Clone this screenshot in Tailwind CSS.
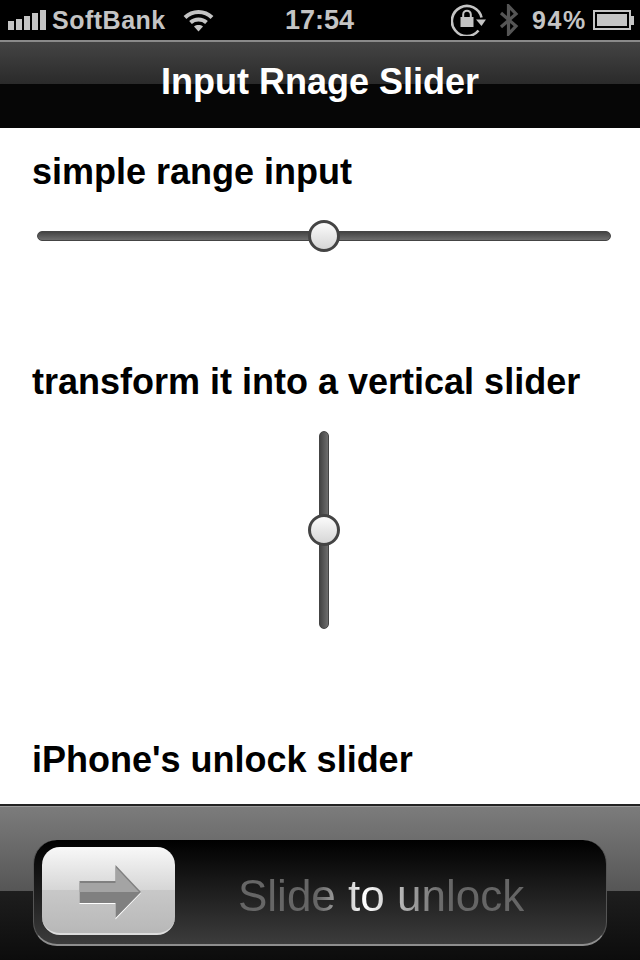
<!DOCTYPE html>
<html lang="en">
<head>
    <meta charset="UTF-8" />
    <title>Input Rnage Slider</title>
    <script src="https://cdn.jsdelivr.net/npm/@tailwindcss/browser@4"></script>
</head>
<body class="w-[640px] h-[960px] overflow-hidden bg-white font-['Liberation_Sans',Arial,sans-serif]">

    <!-- status bar -->
    <div class="relative flex items-center h-[40px] bg-black text-[#c4c4c4]">
        <svg class="ml-[8px] shrink-0" width="38" height="20" viewBox="0 0 38 20" fill="#c4c4c4">
            <rect x="0" y="11" width="6" height="9"/><rect x="8" y="9" width="6" height="11"/><rect x="16" y="6" width="6" height="14"/><rect x="24" y="3" width="6" height="17"/><rect x="32" y="0" width="6" height="20"/>
        </svg>
        <span class="ml-[6px] w-[131px] text-[25px] leading-[40px] font-bold tracking-[0.5px]">SoftBank</span>
        <svg class="shrink-0" width="31" height="24" viewBox="0 0 31 24" fill="none" stroke="#c4c4c4" stroke-width="4">
            <path d="M2 9.5C9.5 2 21.5 2 29 9.5"/><path d="M7.5 14.5C12 10.5 19 10.5 23.5 14.5"/><path d="M15.5 23.5L11 18.5C13.5 16.6 17.5 16.6 20 18.5Z" fill="#c4c4c4" stroke="none"/>
        </svg>
        <span class="ml-[71px] w-[98px] text-[27px] leading-[40px] font-bold">17:54</span>
        <svg class="ml-[68px] shrink-0" width="36" height="32" viewBox="0 0 36 32" fill="none">
            <path d="M27.5 26.5A15 15 0 1 1 30.5 13.5" stroke="#c4c4c4" stroke-width="2.6"/>
            <path d="M25 15.5H35L30.5 22Z" fill="#c4c4c4"/>
            <rect x="9.5" y="13" width="13" height="10" fill="#c4c4c4"/>
            <path d="M12.2 13V10.5a3.8 3.8 0 0 1 7.6 0V13" stroke="#c4c4c4" stroke-width="2"/>
        </svg>
        <svg class="ml-[12px] shrink-0" width="20" height="32" viewBox="0 0 20 32" fill="none" stroke="#555" stroke-width="3.2">
            <path d="M2 9L17 22L9.5 30V2L17 10L2 23"/>
        </svg>
        <span class="ml-[13px] w-[61px] text-[25px] leading-[40px] font-bold tracking-[1.6px]">94%</span>
        <div class="flex items-center shrink-0">
            <div class="w-[38px] h-[20px] border-2 border-[#c4c4c4] p-[2px]"><div class="w-full h-full bg-[#c4c4c4]"></div></div>
            <div class="w-[3px] h-[9px] bg-[#c4c4c4]"></div>
        </div>
    </div>

    <!-- nav bar -->
    <header class="h-[88px] pb-[6px] border-t-2 border-[#8a8a8a] bg-[linear-gradient(#444_0%,#2a2a2a_49%,#060606_49%,#060606_100%)] flex items-center justify-center">
        <h1 class="text-white text-[36px] font-bold leading-none">Input Rnage Slider</h1>
    </header>

    <main class="h-[676px] px-[32px] pt-[24px] flex flex-col text-black">
        <h2 class="h-[40px] leading-[40px] text-[36px] font-bold whitespace-nowrap">simple range input</h2>
        <div class="mt-[28px] h-[32px] flex items-center pl-[5px]">
            <div class="relative shrink-0 w-[574px] h-[10px] rounded-full border border-[#444] bg-[linear-gradient(#444,#6e6e6e)]">
                <div class="absolute left-[270px] top-[-12px] w-[32px] h-[32px] rounded-full border-[3px] border-[#444] bg-[linear-gradient(#fbfbfb,#d6d6d6)]"></div>
            </div>
        </div>

        <h2 class="mt-[110px] h-[40px] leading-[40px] text-[36px] font-bold whitespace-nowrap">transform it into a vertical slider</h2>
        <div class="mt-[29px] h-[198px] flex justify-center pl-[8px]">
            <div class="relative w-[10px] h-[198px] rounded-full border border-[#444] bg-[linear-gradient(90deg,#444,#6e6e6e)]">
                <div class="absolute left-[-12px] top-[82px] w-[32px] h-[32px] rounded-full border-[3px] border-[#444] bg-[linear-gradient(#fbfbfb,#d6d6d6)]"></div>
            </div>
        </div>

        <h2 class="mt-[111px] h-[40px] leading-[40px] text-[36px] font-bold whitespace-nowrap">iPhone's unlock slider</h2>
    </main>

    <!-- unlock bar -->
    <div class="h-[156px] border-t-2 border-[#222] bg-[linear-gradient(#7c7c7c_0%,#565656_55%,#1e1e1e_55%,#0c0c0c_100%)]">
        <div class="h-[1px] bg-[#9a9a9a]"></div>
        <div class="ml-[33px] mt-[33px] w-[574px] h-[106px] rounded-[24px] border-b-2 border-x border-[#8e8e8e] border-x-[#555] bg-[linear-gradient(#000,#3c3c3c)] flex items-start pl-[8px] pt-[7px]">
            <div class="w-[133px] h-[88px] rounded-[18px] border-b-2 border-[#ddd] bg-[linear-gradient(#f8f8f8_0%,#d6d6d6_50%,#c8c8c8_50%,#b8b8b8_100%)] flex items-center justify-center pl-[5px] pt-[5px] shrink-0">
                <svg width="64" height="56" viewBox="0 0 64 56">
                    <path d="M0.5 17.5H36.5V1.5L62 28L36.5 54.5V39H0.5Z" fill="#fff"/>
                    <path d="M0.5 16H36.5V0L62 27L36.5 53V38H0.5Z" fill="#808080"/>
                    <path d="M0.5 18H36.5V2L60 27H0.5Z" fill="#a4a4a4"/>
                </svg>
            </div>
            <span class="ml-[63px] mt-[27px] text-[44px] leading-none whitespace-nowrap text-transparent bg-clip-text bg-linear-to-r from-[#666] from-[28%] via-white via-[44%] to-[#666] to-[72%]">Slide to unlock</span>
        </div>
    </div>

</body>
</html>
